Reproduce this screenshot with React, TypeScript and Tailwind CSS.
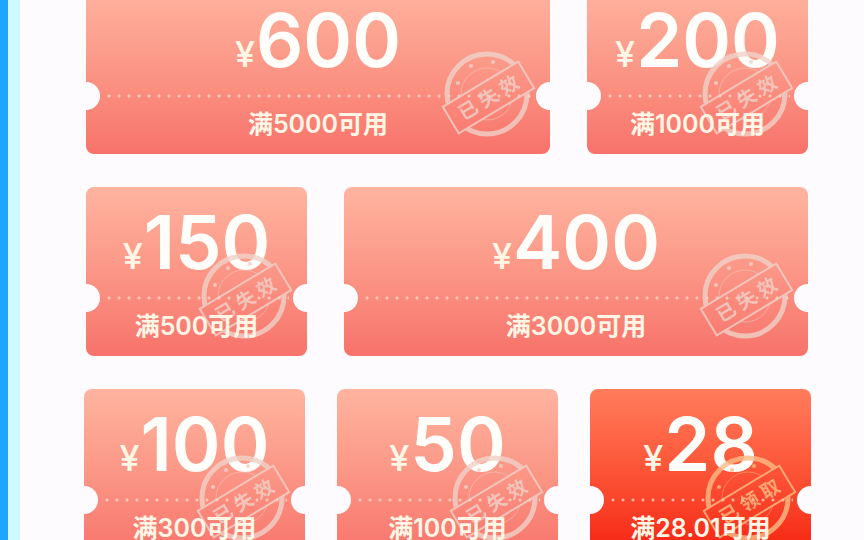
import { useId } from 'react';

interface Coupon {
    amount: string;
    threshold: string;
    status: 'expired' | 'claimed';
    wide?: boolean;
}

const rows: Coupon[][] = [
    [
        { amount: '600', threshold: '5000', status: 'expired', wide: true },
        { amount: '200', threshold: '1000', status: 'expired' },
    ],
    [
        { amount: '150', threshold: '500', status: 'expired' },
        { amount: '400', threshold: '3000', status: 'expired', wide: true },
    ],
    [
        { amount: '100', threshold: '300', status: 'expired' },
        { amount: '50', threshold: '100', status: 'expired' },
        { amount: '28', threshold: '28.01', status: 'claimed' },
    ],
];

function Stamp({ status }: { status: Coupon['status'] }) {
    const maskId = useId();
    const text = status === 'claimed' ? '已领取' : '已失效';
    const color = status === 'claimed' ? 'text-[#fbbd86]' : 'text-[#f0d2c9]';

    return (
        <svg viewBox="-50 -50 100 100" className={`absolute right-[13px] top-[59px] size-[100px] opacity-80 ${color}`} role="img" aria-label={text}>
            <mask id={maskId} maskUnits="userSpaceOnUse" x="-50" y="-50" width="100" height="100">
                <rect x="-50" y="-50" width="100" height="100" fill="white" />
                <rect x="-44" y="-15.5" width="88" height="31" transform="translate(1.5 3.5) rotate(-31)" fill="black" />
            </mask>
            <g fill="none" stroke="currentColor" mask={`url(#${maskId})`}>
                <circle r="40" strokeWidth="5" />
                <circle r="26" strokeWidth="1" opacity="0.6" />
            </g>
            <g fill="currentColor">
                <circle cx="-29" cy="-11" r="2" />
                <circle cx="-16" cy="-28" r="2" />
                <circle cx="6" cy="-32" r="2" />
            </g>
            <g transform="translate(1.5 3.5) rotate(-31)">
                <rect x="-44" y="-15.5" width="88" height="31" fill="none" stroke="currentColor" strokeWidth="2" />
                {text.split('').map((char, i) => (
                    <text key={i} x={(i - 1) * 24} y="7" textAnchor="middle" fontSize="19" fontWeight="700" fill="currentColor">
                        {char}
                    </text>
                ))}
            </g>
        </svg>
    );
}

function CouponCard({ coupon }: { coupon: Coupon }) {
    const { amount, threshold, status, wide } = coupon;
    const background =
        status === 'claimed'
            ? 'from-[#ff7c5b] via-[#fc5235] to-[#f5180a]'
            : 'from-[#ffb4a0] via-[#fb9686] to-[#f7726a]';

    return (
        <li className={`relative rounded-lg bg-linear-to-b pt-[19px] pb-4 ${background} ${wide ? 'flex-[464]' : 'flex-[221]'}`}>
            <p className="flex items-baseline justify-center gap-px font-semibold text-[#fffefa]">
                <span className="text-[36px] leading-none font-medium text-[#fff6e6]">¥</span>
                <span className="text-[74px] leading-[72px]">{amount}</span>
            </p>
            <div className="-mx-3.5 mt-1.5 flex items-center">
                <span className="size-7 rounded-full bg-[#fefbff]" />
                <span className="mx-1 h-1 flex-1 bg-[radial-gradient(circle,rgba(255,240,225,0.6)_1px,transparent_2px)] bg-[length:10px_4px]" />
                <span className="size-7 rounded-full bg-[#fefbff]" />
            </div>
            <Stamp status={status} />
            <p className="relative text-center text-[25px] leading-7 font-semibold text-[#fff6e6]">满{threshold}可用</p>
        </li>
    );
}

export default function App() {
    return (
        <main className="flex h-screen overflow-hidden bg-[#fefbff] font-['Inter','Noto_Sans_CJK_SC',sans-serif]">
            <div className="w-2 bg-[#1ea6ff]" />
            <div className="w-3 bg-[#d0f9ff]" />
            {/* The list is scrolled a little, so the first row starts above the edge */}
            <div className="-mt-[15px] flex flex-1 flex-col gap-[33px]">
                {rows.map((row, i) => (
                    <ul key={i} className={`flex ${row.length === 3 ? 'gap-8 pr-[53px] pl-16' : 'gap-[37px] pr-14 pl-[66px]'}`}>
                        {row.map((coupon) => (
                            <CouponCard key={coupon.amount} coupon={coupon} />
                        ))}
                    </ul>
                ))}
            </div>
        </main>
    );
}
